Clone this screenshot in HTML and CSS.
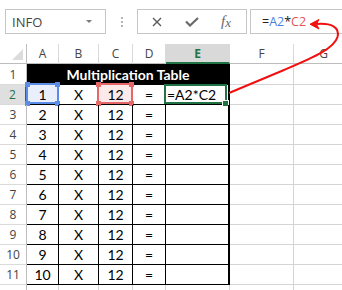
FILE: index.html
```html
<!DOCTYPE html>
<html>
<head>
<meta charset="utf-8">
<link rel="stylesheet" href="styles.css">
</head>
<body>
<div class="toolbar">
  <div class="namebox"><span>INFO</span><span class="caret"></span></div>
  <div class="dots"><i></i><i></i><i></i></div>
  <div class="btnbox">
    <svg class="ic-x" width="10" height="10" viewBox="0 0 10 10"><path d="M1 1 L9 9 M9 1 L1 9" stroke="#5a5a5a" stroke-width="1.4" fill="none"/></svg>
    <svg class="ic-ok" width="14" height="10" viewBox="0 0 14 10"><path d="M1 4.5 L5 8.5 L13 1" stroke="#6a6a6a" stroke-width="2.2" fill="none"/></svg>
    <span class="fx">f<span class="fxx">x</span></span>
  </div>
  <div class="fbox">=<span class="ref-a">A2</span>*<span class="ref-c">C2</span></div>
</div>
<div class="sheet">
  <div class="c corner"><span class="tri"></span></div>
  <div class="c ch">A</div>
  <div class="c ch">B</div>
  <div class="c ch">C</div>
  <div class="c ch">D</div>
  <div class="c ch act">E</div>
  <div class="c ch">F</div>
  <div class="c ch">G</div>

  <div class="c rh">1</div>
  <div class="c title">Multiplication Table</div>
  <div class="c"></div>
  <div class="c"></div>

  <div class="c rh act">2</div>
  <div class="c t sel-a">1<i class="hd tl"></i><i class="hd tr"></i><i class="hd bl"></i><i class="hd br"></i></div>
  <div class="c t">X</div>
  <div class="c t sel-c">12<i class="hd tl"></i><i class="hd tr"></i><i class="hd bl"></i><i class="hd br"></i></div>
  <div class="c t">=</div>
  <div class="c t e active">=A2*C2<i class="ghd"></i></div>
  <div class="c"></div>
  <div class="c"></div>

  <div class="c rh">3</div><div class="c t">2</div><div class="c t">X</div><div class="c t">12</div><div class="c t">=</div><div class="c t e"></div><div class="c"></div><div class="c"></div>
  <div class="c rh">4</div><div class="c t">3</div><div class="c t">X</div><div class="c t">12</div><div class="c t">=</div><div class="c t e"></div><div class="c"></div><div class="c"></div>
  <div class="c rh">5</div><div class="c t">4</div><div class="c t">X</div><div class="c t">12</div><div class="c t">=</div><div class="c t e"></div><div class="c"></div><div class="c"></div>
  <div class="c rh">6</div><div class="c t">5</div><div class="c t">X</div><div class="c t">12</div><div class="c t">=</div><div class="c t e"></div><div class="c"></div><div class="c"></div>
  <div class="c rh">7</div><div class="c t">6</div><div class="c t">X</div><div class="c t">12</div><div class="c t">=</div><div class="c t e"></div><div class="c"></div><div class="c"></div>
  <div class="c rh">8</div><div class="c t">7</div><div class="c t">X</div><div class="c t">12</div><div class="c t">=</div><div class="c t e"></div><div class="c"></div><div class="c"></div>
  <div class="c rh">9</div><div class="c t">8</div><div class="c t">X</div><div class="c t">12</div><div class="c t">=</div><div class="c t e"></div><div class="c"></div><div class="c"></div>
  <div class="c rh">10</div><div class="c t">9</div><div class="c t">X</div><div class="c t">12</div><div class="c t">=</div><div class="c t e"></div><div class="c"></div><div class="c"></div>
  <div class="c rh">11</div><div class="c t">10</div><div class="c t">X</div><div class="c t">12</div><div class="c t">=</div><div class="c t e"></div><div class="c"></div><div class="c"></div>
  <div class="c rh"></div><div class="c"></div><div class="c"></div><div class="c"></div><div class="c"></div><div class="c"></div><div class="c"></div><div class="c"></div>
</div>
<svg class="arrow" width="342" height="290" viewBox="0 0 342 290">
  <path d="M229 93 L284 70 C312 58 334 49 337.5 37 C340 27 331 23 317 24" stroke="#f01010" stroke-width="2" fill="none"/>
  <path d="M310 24.2 L319 19.5 L316.5 24.2 L319 29 Z" fill="#f01010" stroke="#f01010" stroke-width="1" stroke-linejoin="round"/>
</svg>
</body>
</html>
```
FILE: styles.css
```css
html, body {
  margin: 0;
  padding: 0;
}
body {
  width: 342px;
  height: 290px;
  overflow: hidden;
  background: #fff;
  position: relative;
  font-family: "Open Sans", sans-serif;
}
.toolbar {
  display: flex;
  align-items: flex-start;
  height: 44px;
  box-sizing: border-box;
  padding: 9px 0 0 5px;
}
.toolbar > * {
  flex: none;
}
.namebox {
  width: 101px;
  height: 25px;
  box-sizing: border-box;
  border: 1px solid #c6c6c6;
  display: flex;
  align-items: center;
  justify-content: space-between;
  padding: 0 13px 0 6px;
  font-size: 13px;
  color: #444;
}
.caret {
  width: 0;
  height: 0;
  border-left: 3.5px solid transparent;
  border-right: 3.5px solid transparent;
  border-top: 3.5px solid #7a7a7a;
}
.dots {
  width: 31px;
  height: 25px;
  display: flex;
  flex-direction: column;
  align-items: center;
  justify-content: center;
  gap: 2px;
}
.dots i {
  width: 2px;
  height: 2px;
  background: #b4b4b4;
}
.btnbox {
  width: 110px;
  height: 25px;
  box-sizing: border-box;
  border: 1px solid #c6c6c6;
  display: flex;
  align-items: center;
}
.ic-x { margin-left: 14px; }
.ic-ok { margin-left: 23px; }
.fx {
  margin-left: 22px;
  font-family: "Liberation Serif", serif;
  font-style: italic;
  font-size: 15px;
  color: #6a6a6a;
  line-height: 1;
}
.fxx {
  font-size: 13px;
  position: relative;
  top: 1px;
}
.fbox {
  margin-left: 3px;
  width: 120px;
  height: 25px;
  box-sizing: border-box;
  border: 1px solid #c6c6c6;
  padding-left: 11px;
  display: flex;
  align-items: center;
  font-size: 12.5px;
  color: #222;
}
.ref-a { color: #4a7fe0; }
.ref-c { color: #e35555; }

.sheet {
  display: grid;
  grid-template-columns: 27px 32px 40px 34px 33px 64px 64px 60px;
  grid-template-rows: 20px 21px repeat(11, 20px);
}
.c {
  box-sizing: border-box;
  border-right: 1px solid #d4d4d4;
  border-bottom: 1px solid #d4d4d4;
  display: flex;
  align-items: center;
  justify-content: center;
  font-family: Lato, sans-serif;
  font-size: 14px;
  color: #000;
  position: relative;
}
.corner {
  border-right: 1px solid #bdbdbd;
  border-bottom: 1px solid #bdbdbd;
}
.tri {
  position: absolute;
  right: 3px;
  bottom: 3px;
  width: 0;
  height: 0;
  border-left: 11px solid transparent;
  border-bottom: 11px solid #dcdcdc;
}
.ch {
  font-family: "Open Sans", sans-serif;
  font-size: 12px;
  color: #444;
  border-bottom: 1px solid #bdbdbd;
  border-right-color: #d9d9d9;
}
.ch.act {
  background: #d9d9d9;
  color: #217346;
  font-weight: bold;
  border-bottom: 2px solid #217346;
}
.rh {
  font-family: "Open Sans", sans-serif;
  font-size: 12px;
  color: #444;
  border-right: 1px solid #bdbdbd;
  border-bottom-color: #dadada;
}
.rh.act {
  background: #dfdfdf;
  color: #217346;
  border-right: 2px solid #217346;
}
.title {
  grid-column: span 5;
  background: #000;
  border-color: #000;
  color: #fff;
  font-weight: bold;
  font-size: 14px;
}
.t {
  border-right: 1px solid #000;
  border-bottom: 1px solid #000;
}
.t.e {
  border-right: 2px solid #000;
}
.sel-a { background: #e9effc; }
.sel-c { background: #fce9e9; }
.sel-a::before, .sel-c::before {
  content: "";
  position: absolute;
  top: -2px;
  left: -1px;
  right: -1px;
  bottom: 0;
  border: 2px solid #5b8de6;
}
.sel-c::before {
  left: -2px;
  border-color: #e66767;
}
.hd {
  position: absolute;
  width: 5px;
  height: 5px;
  background: #5b8de6;
}
.sel-c .hd { background: #e66767; }
.hd.tl { top: -3px; left: -2px; }
.hd.tr { top: -3px; right: -2px; }
.hd.bl { bottom: -2px; left: -2px; }
.hd.br { bottom: -2px; right: -2px; }
.sel-c .hd.tl, .sel-c .hd.bl { left: -3px; }
.active {
  justify-content: flex-start;
  padding-left: 1px;
}
.active::before {
  content: "";
  position: absolute;
  top: -1px;
  left: -2px;
  right: 1px;
  bottom: 0;
  border: 2px solid #217346;
}
.ghd {
  position: absolute;
  right: -1px;
  bottom: -3px;
  width: 5px;
  height: 5px;
  background: #217346;
  border: 1px solid #fff;
}
.arrow {
  position: absolute;
  left: 0;
  top: 0;
  pointer-events: none;
}
```
